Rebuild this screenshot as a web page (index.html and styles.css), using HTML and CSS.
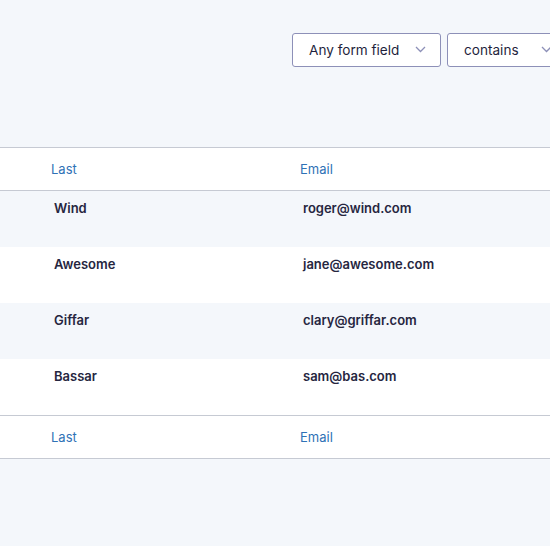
FILE: index.html
```html
<!DOCTYPE html>
<html lang="en">
<head>
  <meta charset="UTF-8">
  <meta name="viewport" content="width=device-width, initial-scale=1">
  <title>Entries</title>
  <link rel="stylesheet" href="styles.css">
</head>
<body>
  <div class="toolbar">
    <div class="select select-field">
      <span>Any form field</span>
      <svg class="chevron" viewBox="0 0 11 7" width="11" height="7"><path d="M1 1l4.5 4.5L10 1" fill="none" stroke="currentColor" stroke-width="1.3"/></svg>
    </div>
    <div class="select select-op">
      <span>contains</span>
      <svg class="chevron" viewBox="0 0 11 7" width="11" height="7"><path d="M1 1l4.5 4.5L10 1" fill="none" stroke="currentColor" stroke-width="1.3"/></svg>
    </div>
  </div>

  <div class="entries">
    <div class="row head">
      <div class="cell">Last</div>
      <div class="cell">Email</div>
    </div>
    <div class="row alt">
      <div class="cell">Wind</div>
      <div class="cell">roger@wind.com</div>
    </div>
    <div class="row">
      <div class="cell">Awesome</div>
      <div class="cell">jane@awesome.com</div>
    </div>
    <div class="row alt">
      <div class="cell">Giffar</div>
      <div class="cell">clary@griffar.com</div>
    </div>
    <div class="row">
      <div class="cell">Bassar</div>
      <div class="cell">sam@bas.com</div>
    </div>
    <div class="row head foot">
      <div class="cell">Last</div>
      <div class="cell">Email</div>
    </div>
  </div>
</body>
</html>
```

FILE: styles.css
```css
* {
  margin: 0;
  padding: 0;
  box-sizing: border-box;
}

body {
  background: #f4f7fb;
  font-family: Inter, 'Noto Sans', sans-serif;
  color: #23233f;
  overflow: hidden;
  width: 550px;
  height: 546px;
}

.toolbar {
  display: flex;
  gap: 6px;
  padding: 33px 0 0 292px;
  height: 147px;
  white-space: nowrap;
}

.select {
  flex: none;
  display: flex;
  align-items: center;
  justify-content: space-between;
  height: 34px;
  padding: 0 14px 1px 16px;
  background: #fff;
  border: 1px solid #8d90b8;
  border-radius: 3px;
  font-size: 13.6px;
  color: #1f1f3d;
}

.select-field {
  width: 149px;
}

.select-op {
  width: 120px;
}

.chevron {
  color: #8d90b8;
}

.entries {
  border-top: 1px solid #c6cad3;
}

.row {
  display: grid;
  grid-template-columns: 249px 1fr;
  padding-left: 54px;
  height: 56px;
  background: #fff;
  font-size: 13px;
  font-weight: 600;
  line-height: 20px;
  color: #26263f;
}

.row .cell {
  padding-top: 7px;
}

.row.alt {
  background: #f4f7fb;
}

.row.head {
  height: 43px;
  padding-left: 51px;
  align-items: center;
  border-bottom: 1px solid #c6cad3;
  font-weight: 400;
  color: #2f72b6;
}

.row.head .cell {
  padding-top: 0;
}

.row.foot {
  height: 44px;
  border-top: 1px solid #c6cad3;
}
```
